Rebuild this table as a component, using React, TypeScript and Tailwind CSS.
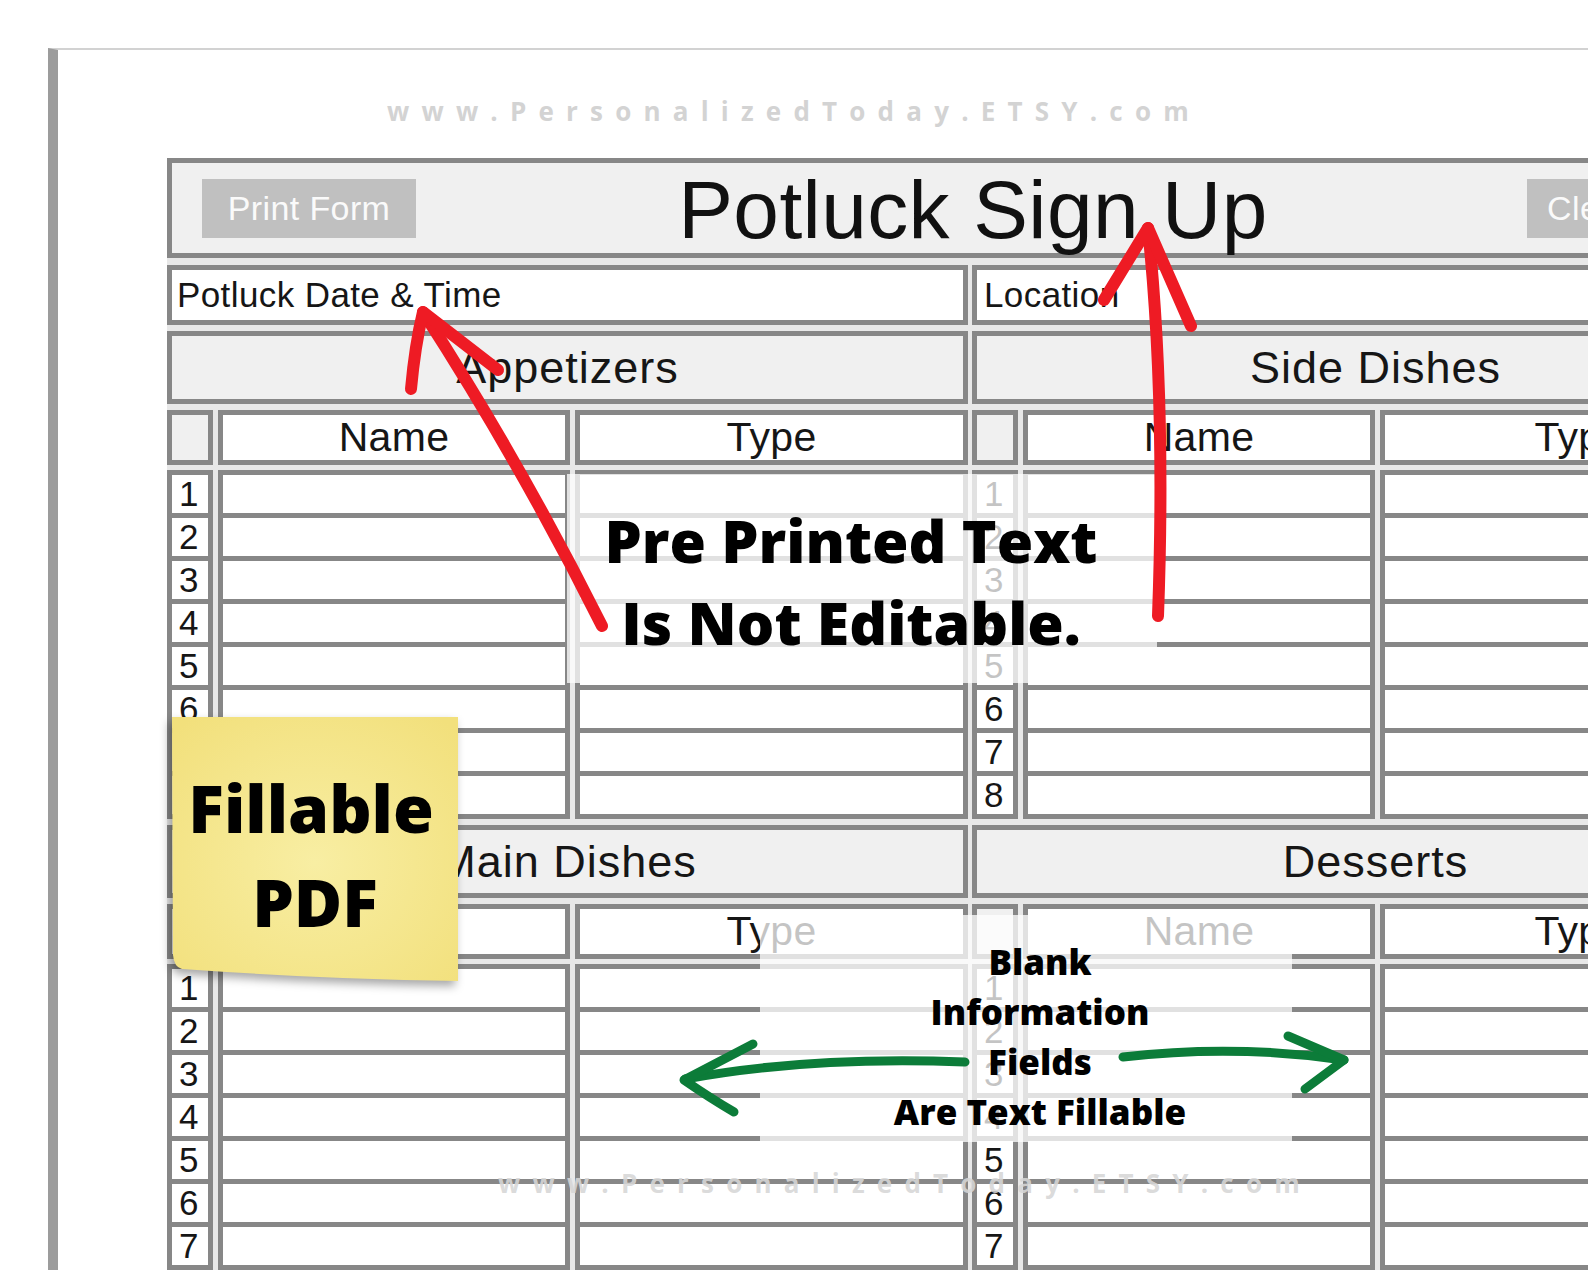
import React from 'react';

/**
 * Potluck sign up form, annotated with call-outs
 */

const rowNumbers = Array.from({ length: 8 }, (_, i) => i + 1);

function Box({ className = '', children }: { className?: string; children?: React.ReactNode }) {
  return <div className={`border-[5px] border-[#878787] ${className}`}>{children}</div>;
}

function DataColumn({ className = '', numbered = false }: { className?: string; numbered?: boolean }) {
  return (
    <div className={`border-[5px] border-[#878787] bg-white flex flex-col divide-y-[5px] divide-[#878787] ${className}`}>
      {rowNumbers.map((n) => (
        <div key={n} className="pl-[7px] text-[35px] leading-[38px] text-[#161616]">
          {numbered ? n : '\u00a0'}
        </div>
      ))}
    </div>
  );
}

function Section({ title, width }: { title: string; width: string }) {
  return (
    <div className={`flex flex-col ${width}`}>
      {/* Section title */}
      <Box className="h-[73px] bg-[#f0f0f0] flex items-center justify-center">
        <span className="text-[45px] leading-[63px] tracking-[1px] text-[#161616]">{title}</span>
      </Box>

      {/* Column headers */}
      <div className="mt-[6px] flex gap-[5px] h-[55px]">
        <Box className="w-[46px] bg-[#f0f0f0]" />
        <Box className="w-[352px] bg-white flex justify-center">
          <span className="text-[41px] leading-[45px] tracking-[0.3px] text-[#161616]">Name</span>
        </Box>
        <Box className="flex-1 bg-white flex justify-center">
          <span className="text-[41px] leading-[45px] tracking-[0.3px] text-[#161616]">Type</span>
        </Box>
      </div>

      {/* Fields */}
      <div className="mt-[5px] flex gap-[5px]">
        <DataColumn className="w-[46px]" numbered />
        <DataColumn className="w-[352px]" />
        <DataColumn className="flex-1" />
      </div>
    </div>
  );
}

function Form() {
  return (
    <div className="w-[1612px] bg-[#e8e8e8] font-['Liberation_Sans',Arial,sans-serif]">
      {/* Title bar */}
      <Box className="h-[100px] bg-[#f0f0f0] grid grid-cols-[1fr_auto_1fr] items-center">
        <div className="justify-self-start ml-[30px] w-[214px] h-[59px] bg-[#c0c0c0] flex items-center justify-center text-[34px] tracking-[0.4px] text-[#fafafa]">
          Print Form
        </div>
        <h1 className="mt-[3px] text-[82px] leading-[82px] tracking-[0.4px] text-[#111]">Potluck Sign Up</h1>
        <div className="justify-self-end mr-[33px] w-[214px] h-[59px] bg-[#c0c0c0] flex items-center justify-center text-[34px] tracking-[0.4px] text-[#fafafa]">
          Clear Form
        </div>
      </Box>

      {/* Date / location */}
      <div className="mt-[7px] flex gap-[4px]">
        <Box className="w-[801px] h-[60px] bg-white pl-[5px] text-[35px] leading-[50px] tracking-[0.4px] text-[#161616]">
          Potluck Date &amp; Time
        </Box>
        <Box className="flex-1 h-[60px] bg-white pl-[7px] text-[35px] leading-[50px] tracking-[0.4px] text-[#161616]">
          Location
        </Box>
      </div>

      <div className="mt-[6px] flex gap-[4px]">
        <Section title="Appetizers" width="w-[801px]" />
        <Section title="Side Dishes" width="flex-1" />
      </div>

      <div className="mt-[6px] flex gap-[4px]">
        <Section title="Main Dishes" width="w-[801px]" />
        <Section title="Desserts" width="flex-1" />
      </div>
    </div>
  );
}

function Arrows() {
  return (
    <svg
      className="absolute inset-0 pointer-events-none"
      width="1588"
      height="1270"
      viewBox="0 0 1588 1270"
      fill="none"
      strokeLinecap="round"
      strokeLinejoin="round"
    >
      {/* red: pointing at the printed labels */}
      <g stroke="#ee1b24" strokeWidth="12">
        <path d="M602 626 Q520 462 423 312" />
        <path d="M411 389 Q415 345 423 312 L498 370" />
        <path d="M1158 616 Q1166 400 1148 228" />
        <path d="M1104 300 L1148 228 L1191 326" />
      </g>
      {/* green: pointing at the blank fields */}
      <g stroke="#0c7c39" strokeWidth="9">
        <path d="M965 1062 Q810 1056 685 1079" />
        <path d="M753 1044 L684 1080 Q710 1098 734 1112" />
        <path d="M1123 1057 Q1235 1044 1344 1060" />
        <path d="M1288 1036 L1344 1060 L1305 1089" />
      </g>
    </svg>
  );
}

function StickyNote() {
  return (
    <div className="absolute left-[170px] top-[717px] w-[290px] h-[268px]">
      <svg
        className="absolute inset-0 drop-shadow-[-3px_5px_5px_rgba(0,0,0,0.35)]"
        width="290"
        height="268"
        viewBox="0 0 290 268"
      >
        <defs>
          <radialGradient id="note" cx="0.5" cy="0.55" r="0.7">
            <stop offset="0" stopColor="#f8eea3" />
            <stop offset="1" stopColor="#f2e07c" />
          </radialGradient>
        </defs>
        <path d="M2 0 H288 V264 Q150 262 12 252 Q4 250 3 238 Z" fill="url(#note)" />
      </svg>
      <div className="relative pt-[43px] pr-[8px] flex flex-col items-center font-['Open_Sans',sans-serif] font-extrabold text-[66px] leading-[94px] text-black">
        <span>Fillable</span>
        <span className="pl-[8px]">PDF</span>
      </div>
    </div>
  );
}

export default function App() {
  return (
    <div className="relative w-[1588px] h-[1270px] overflow-hidden bg-white">
      <div className="pt-[48px] pl-[48px] h-full">
        {/* Document page */}
        <div className="h-full border-l-[10px] border-t-2 border-l-[#9c9c9c] border-t-[#d2d2d2] pl-[109px]">
          <div className="h-[108px] pt-[44px] pl-[220px] font-['Open_Sans',sans-serif] font-bold text-[26px] leading-[34px] tracking-[12.2px] text-[#d3d3d3] whitespace-nowrap">
            www.PersonalizedToday.ETSY.com
          </div>
          <Form />
        </div>
      </div>

      {/* Call-out: printed text */}
      <div className="absolute left-[567px] top-[474px] w-[590px] h-[209px] bg-white/75 pt-[25px] pr-[22px] flex flex-col items-center font-['Open_Sans',sans-serif] font-extrabold text-[59px] leading-[82px] text-black whitespace-nowrap">
        <span>Pre Printed Text</span>
        <span>Is Not Editable.</span>
      </div>

      {/* Call-out: fillable fields */}
      <div className="absolute left-[760px] top-[915px] w-[532px] h-[227px] bg-white/75 pt-[22px] pl-[28px] flex flex-col items-center font-['Open_Sans',sans-serif] font-extrabold text-[35px] leading-[50px] text-black whitespace-nowrap">
        <span>Blank</span>
        <span>Information</span>
        <span>Fields</span>
        <span>Are Text Fillable</span>
      </div>

      <StickyNote />
      <Arrows />

      <div className="absolute left-[498px] top-[1166px] font-['Open_Sans',sans-serif] font-bold text-[26px] leading-[34px] tracking-[12.2px] text-[#d6d6d6]/90 whitespace-nowrap">
        www.PersonalizedToday.ETSY.com
      </div>
    </div>
  );
}
